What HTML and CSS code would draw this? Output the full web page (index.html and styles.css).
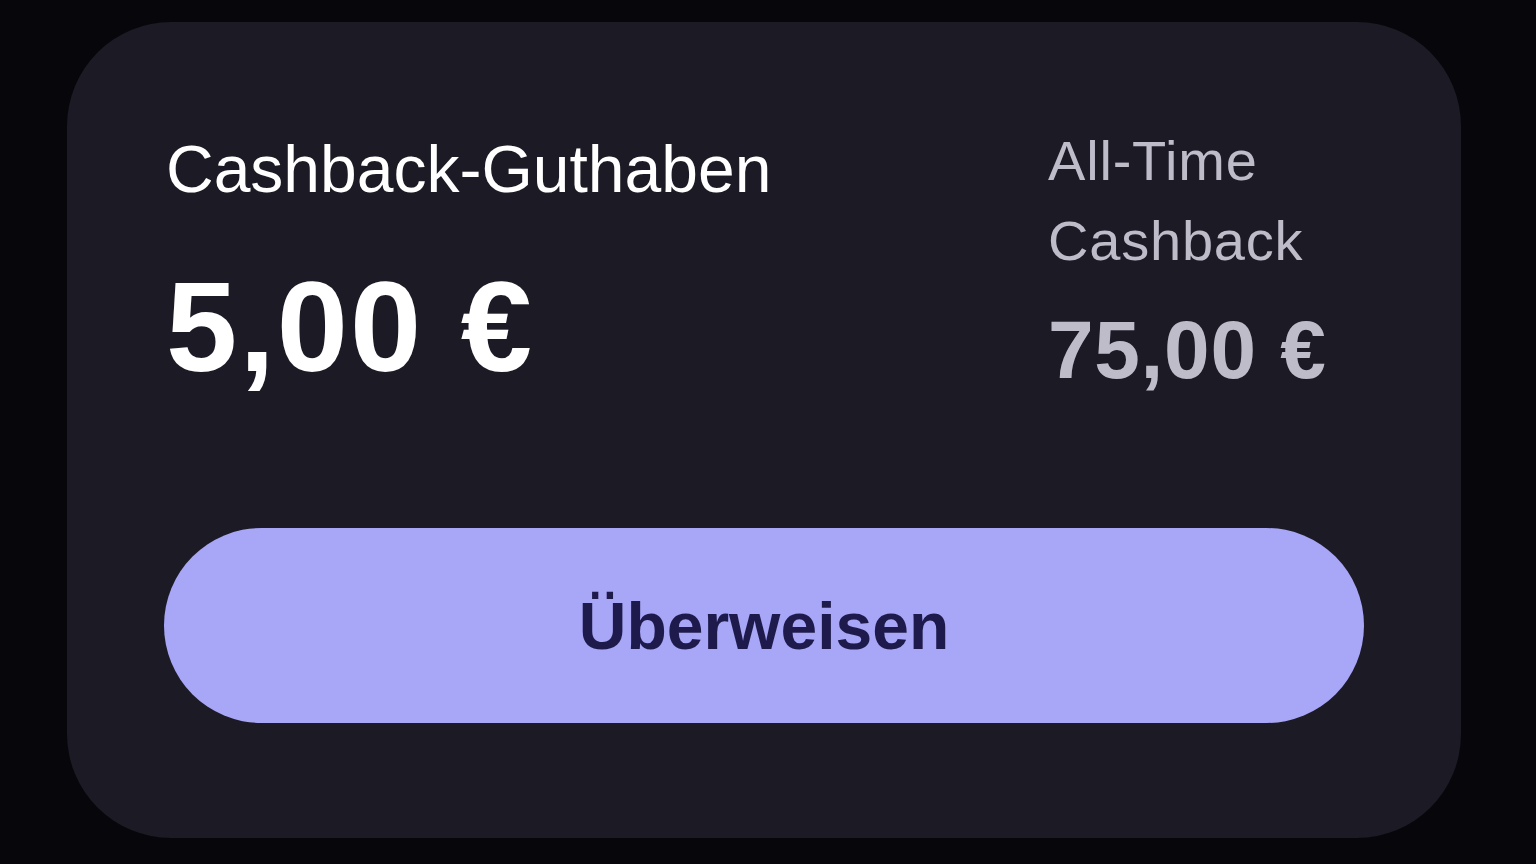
FILE: index.html
```html
<!DOCTYPE html>
<html lang="de">
<head>
<meta charset="utf-8">
<title>Cashback</title>
<link rel="stylesheet" href="styles.css">
</head>
<body>
<main class="card">
  <section class="stats">
    <div class="balance">
      <div class="balance-label">Cashback-Guthaben</div>
      <div class="balance-amount">5,00 €</div>
    </div>
    <div class="total">
      <div class="total-label">All-Time<br>Cashback</div>
      <div class="total-amount">75,00 €</div>
    </div>
  </section>
  <button class="transfer" type="button">Überweisen</button>
</main>
</body>
</html>
```
FILE: styles.css
```css
html, body {
  margin: 0;
  padding: 0;
  background: #06060b;
}
body {
  width: 1536px;
  height: 864px;
  overflow: hidden;
  font-family: "Liberation Sans", Arial, sans-serif;
}
.card {
  box-sizing: border-box;
  width: 1394px;
  height: 816px;
  margin: 22px 0 0 67px;
  padding: 99px 97px 0 97px;
  background: #1b1a25;
  border-radius: 104px;
  display: flex;
  flex-direction: column;
}
.stats {
  display: flex;
  justify-content: space-between;
  align-items: flex-start;
}
.balance {
  margin-top: 15px;
  padding-left: 2px;
}
.balance-label {
  color: #ffffff;
  font-size: 66px;
  line-height: 66px;
}
.balance-amount {
  margin-top: 61px;
  color: #ffffff;
  font-size: 128px;
  line-height: 128px;
  font-weight: 700;
  letter-spacing: 2px;
}
.total {
  width: 316px;
}
.total-label {
  color: #bebcc9;
  font-size: 56px;
  line-height: 80px;
  letter-spacing: 0.8px;
}
.total-amount {
  margin-top: 28px;
  color: #bebcc9;
  font-size: 82px;
  line-height: 82px;
  font-weight: 700;
  letter-spacing: 0.7px;
}
.transfer {
  margin-top: 137px;
  height: 195px;
  width: 100%;
  border: none;
  border-radius: 98px;
  background: #a8a6f7;
  color: #1e1b4c;
  font-family: "Liberation Sans", Arial, sans-serif;
  font-size: 66px;
  font-weight: 700;
  padding: 0;
  cursor: pointer;
}
```
